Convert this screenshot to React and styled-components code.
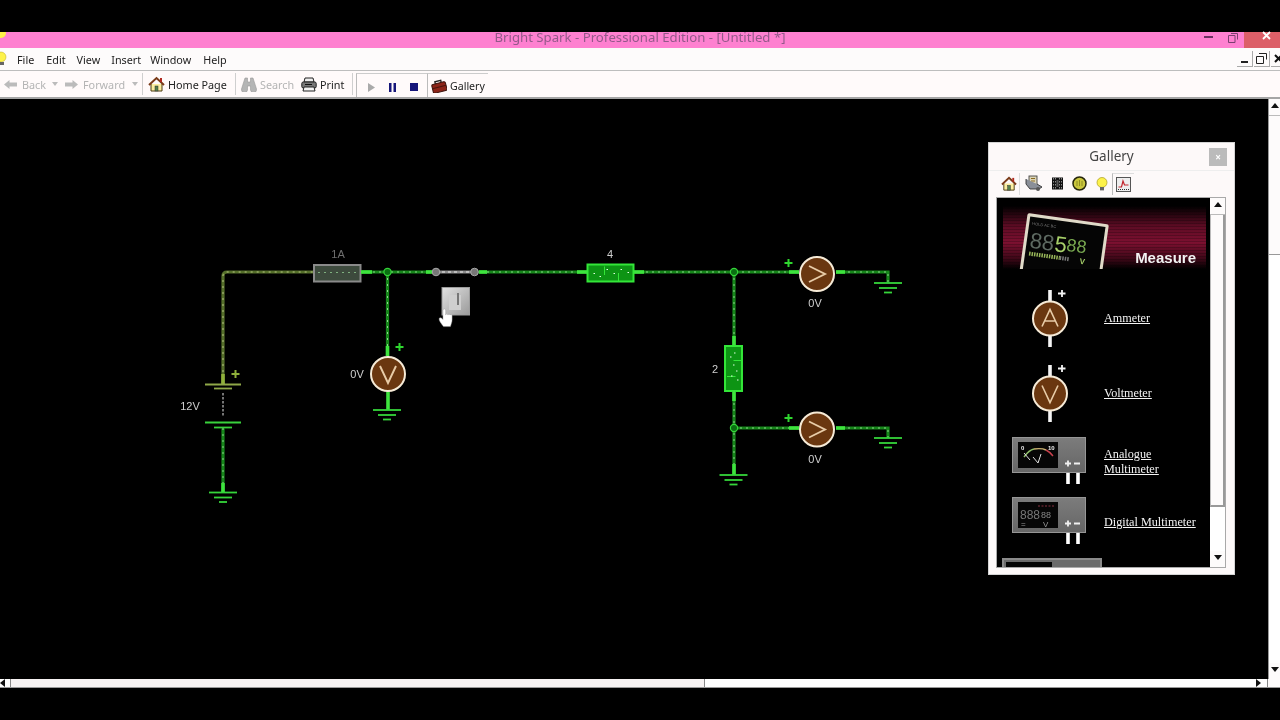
import React from 'react';
import styled, { createGlobalStyle } from 'styled-components';

const GlobalStyle = createGlobalStyle`
  html, body { margin: 0; padding: 0; background: #000; }
  body { font-family: "Noto Sans", "Liberation Sans", sans-serif; overflow: hidden; }
`;

const Page = styled.div`
  width: 1280px;
  height: 720px;
  padding: 32px 0;
  box-sizing: border-box;
  background: #000;
  display: flex;
  flex-direction: column;
  overflow: hidden;
  filter: blur(0.3px);
`;

const TitleBar = styled.div`
  height: 16px;
  flex: none;
  background: #fe80d0;
  display: grid;
  grid-template-columns: 1fr auto 1fr;
  align-items: start;
`;

const TitleText = styled.div`
  font-size: 13.2px;
  line-height: 10px;
  color: #94598a;
`;

const Caption = styled.div`
  display: flex;
  justify-content: flex-end;
  align-items: stretch;
  height: 16px;
`;

const CaptionButton = styled.div`
  width: ${p => p.$w}px;
  box-sizing: border-box;
  padding: 0 0 ${p => p.$lift || 5}px ${p => p.$shift || 0}px;
  display: flex;
  align-items: center;
  justify-content: center;
  background: ${p => p.$bg || 'transparent'};
`;

const MenuBar = styled.div`
  height: 23px;
  flex: none;
  background: #fdfbfb;
  border-bottom: 1px solid #bdbdbd;
  box-sizing: border-box;
  display: flex;
  align-items: center;
`;

const MenuItem = styled.span`
  font-size: 10.8px;
  color: #222;
  margin-left: ${p => p.$gap}px;
`;

const MdiButtons = styled.div`
  margin-left: auto;
  display: flex;
  height: 16px;
  align-items: stretch;
  margin-right: -7px;
`;

const MdiButton = styled.div`
  width: 15px;
  margin-left: 1px;
  display: flex;
  align-items: center;
  justify-content: center;
  border-right: 1px solid #aaa;
  border-bottom: 1px solid #aaa;
`;

const Toolbar = styled.div`
  height: 28px;
  flex: none;
  background: #fffafa;
  border-bottom: 2px solid #a5a5a5;
  box-sizing: border-box;
  display: flex;
  align-items: center;
  padding-left: 4px;
`;

const ToolItem = styled.div`
  width: ${p => p.$w}px;
  flex: none;
  display: flex;
  align-items: center;
  gap: ${p => p.$gap ?? 4}px;
  font-size: 10.8px;
  color: ${p => (p.$off ? '#b4b4b4' : '#222')};
  white-space: nowrap;
`;

const CaretSlot = styled.span`
  display: flex;
  margin-left: ${p => p.$left}px;
`;

const ToolDivider = styled.div`
  width: 1px;
  height: 22px;
  flex: none;
  background: #cfcfcf;
  margin-right: ${p => p.$after}px;
`;

const BoxedGroup = styled.div`
  width: ${p => p.$w}px;
  height: 24px;
  align-self: flex-end;
  flex: none;
  box-sizing: border-box;
  border-left: 1px solid #bbb;
  border-top: 1px solid #ccc;
  display: flex;
  align-items: center;
  padding: ${p => p.$top || 0}px 0 0 ${p => p.$pad}px;
  gap: ${p => p.$gap}px;
  font-size: 10.6px;
  color: #222;
`;

const Workspace = styled.div`
  flex: 1;
  min-height: 0;
  display: flex;
  position: relative;
`;

const Canvas = styled.div`
  flex: 1;
  background: #000;
  overflow: hidden;
`;

const VScroll = styled.div`
  width: 12px;
  flex: none;
  background: #fff;
  border-left: 1px solid #999;
  box-sizing: border-box;
  display: flex;
  flex-direction: column;
`;

const ScrollEnd = styled.div`
  height: 16px;
  flex: none;
  display: flex;
  align-items: center;
  justify-content: center;
  background: #fdfbfb;
  border-bottom: ${p => (p.$top ? '1px solid #bbb' : 'none')};
  margin-top: ${p => (p.$bottom ? 'auto' : '0')};
`;

const VThumb = styled.div`
  height: 138px;
  flex: none;
  background: #fdfbfb;
  border-bottom: 1px solid #999;
`;

const HScroll = styled.div`
  height: 9px;
  flex: none;
  background: #fff;
  display: flex;
  align-items: stretch;
  border-bottom: 1px solid #999;
  box-sizing: border-box;
`;

const HStart = styled.div`
  width: 10px;
  flex: none;
  display: flex;
  align-items: flex-end;
  overflow: hidden;
`;

const HThumb = styled.div`
  width: 693px;
  flex: none;
  background: #f6f2f2;
  border-left: 1px solid #888;
  border-right: 1px solid #888;
`;

const HEnd = styled.div`
  flex: 1;
  display: flex;
  justify-content: flex-end;
  align-items: flex-end;
  padding-right: 3px;
  overflow: hidden;
`;

const HCorner = styled.div`
  width: 12px;
  flex: none;
  border-left: 1px solid #888;
  background: #fdfbfb;
`;

/* floating window, sits over the canvas */
const GalleryWindow = styled.div`
  position: absolute;
  left: 988px;
  top: 43px;
  width: 247px;
  height: 433px;
  box-sizing: border-box;
  background: #fdf9f9;
  border: 1px solid #d4d4d4;
  display: flex;
  flex-direction: column;
`;

const GalleryTitle = styled.div`
  height: 27px;
  flex: none;
  display: flex;
  align-items: center;
  justify-content: center;
  position: relative;
  font-size: 13.5px;
  color: #444;
  padding-bottom: 1px;
  box-sizing: border-box;
`;

const CloseBox = styled.div`
  position: absolute;
  right: 7px;
  top: 5px;
  width: 18px;
  height: 18px;
  background: #bbb;
  color: #fff;
  font-size: 10px;
  line-height: 18px;
  text-align: center;
  font-weight: 700;
`;

const GalleryTools = styled.div`
  height: 26px;
  flex: none;
  border-top: 1px solid #eee;
  display: flex;
  align-items: center;
  padding-left: 9px;
  box-sizing: border-box;
`;

const GalleryTool = styled.div`
  width: ${p => p.$w}px;
  height: 22px;
  flex: none;
  display: flex;
  align-items: center;
  justify-content: center;
  box-sizing: border-box;
  border-left: ${p => (p.$pressed ? '1px solid #bbb' : 'none')};
  border-top: ${p => (p.$pressed ? '1px solid #ddd' : 'none')};
  border-right: ${p => (p.$split ? '1px solid #ddd' : 'none')};
`;

const ListFrame = styled.div`
  margin: 1px 8px 0 7px;
  height: 371px;
  flex: none;
  display: flex;
  border: 1px solid #a9a9a9;
  box-sizing: border-box;
`;

const List = styled.div`
  flex: 1;
  background: #000;
  overflow: hidden;
  display: flex;
  flex-direction: column;
`;

const Banner = styled.div`
  height: 63px;
  margin: 8px 4px 21px 6px;
  flex: none;
  position: relative;
  overflow: hidden;
  background:
    repeating-linear-gradient(0deg, rgba(0, 0, 0, 0.22) 0 1px, transparent 1px 3px),
    linear-gradient(180deg, #000 0%, #5d0c24 32%, #7c1030 58%, #3a0716 85%, #000 100%);
`;

const BannerLabel = styled.div`
  position: absolute;
  right: 10px;
  bottom: 3px;
  font: 700 15px "Liberation Sans", sans-serif;
  color: #f2f2f2;
`;

const MeterArt = styled.svg`
  position: absolute;
  left: 8px;
  top: 0;
`;

const ListRow = styled.div`
  height: ${p => p.$h}px;
  flex: none;
  display: flex;
  align-items: flex-start;
`;

const RowIcon = styled.div`
  width: 107px;
  flex: none;
  box-sizing: border-box;
  padding-left: ${p => p.$pad}px;
  display: flex;
`;

const RowLink = styled.a`
  font: 12.2px/15px "Liberation Serif", serif;
  color: #f4f4f4;
  text-decoration: underline;
  margin-top: ${p => p.$top}px;
  white-space: pre-line;
`;

const PartialMeter = styled.div`
  width: 100px;
  height: 30px;
  flex: none;
  margin-left: 5px;
  background: #6b6b6b;
  border: 2px solid #8a8a8a;
  box-sizing: border-box;
  padding: 2px 0 0 2px;
`;

const PartialScreen = styled.div`
  width: 46px;
  height: 20px;
  background: #050505;
`;

const ListScroll = styled.div`
  width: 15px;
  flex: none;
  background: #fff;
  display: flex;
  flex-direction: column;
`;

const ListThumb = styled.div`
  height: 292px;
  flex: none;
  background: #fdfbfb;
  border-left: 1px solid #bbb;
  border-right: 2px solid #999;
  border-bottom: 2px solid #999;
  box-sizing: border-box;
`;

const Arrow = ({ up, left, right }) => {
  const d = up ? 'M0 5 L4 0 L8 5Z' : left ? 'M5 0 L0 4 L5 8Z' : right ? 'M0 0 L5 4 L0 8Z' : 'M0 0 L8 0 L4 5Z';
  return (
    <svg width="8" height="8" viewBox="0 0 8 8" style={{ flex: 'none' }}>
      <path d={d} fill="#111" />
    </svg>
  );
};

const HomeIcon = ({ size = 17 }) => (
  <svg width={size} height={size} viewBox="0 0 17 17">
    <path d="M3 8v7h11V8" fill="#fbeea0" stroke="#4a3a10" strokeWidth="1" />
    <path d="M1 9l7.5-7L16 9" fill="none" stroke="#7a3a18" strokeWidth="2" />
    <rect x="12" y="2" width="2" height="4" fill="#b02a20" />
    <rect x="7" y="10" width="3" height="5" fill="#55804a" stroke="#333" strokeWidth="0.5" />
  </svg>
);

const BackArrow = ({ flip }) => (
  <svg width="13" height="11" viewBox="0 0 13 11" style={flip ? { transform: 'scaleX(-1)' } : undefined}>
    <path d="M0 5.5L5.5 1v2.5H13v4H5.5V10Z" fill="#bbb" />
  </svg>
);

const Caret = () => (
  <svg width="6" height="4" viewBox="0 0 6 4">
    <path d="M0 0h6L3 4Z" fill="#bbb" />
  </svg>
);

const Binoculars = () => (
  <svg width="16" height="15" viewBox="0 0 16 15">
    <path d="M4 1h2.5v4h3V1H12l3.5 11a2.5 2.5 0 0 1-6 1V9h-3v4a2.5 2.5 0 0 1-6-1Z" fill="#b5b5b5" stroke="#999" strokeWidth="0.6" />
  </svg>
);

const Printer = () => (
  <svg width="16" height="15" viewBox="0 0 16 15">
    <path d="M4 1h8l1 4H3Z" fill="#eee" stroke="#222" />
    <rect x="0.8" y="5" width="14.4" height="6" rx="1.5" fill="#777" stroke="#222" />
    <path d="M3 10h10l1 4H2Z" fill="#f4f4f4" stroke="#222" />
    <path d="M4 7.5h7" stroke="#111" />
  </svg>
);

const Briefcase = () => (
  <svg width="16" height="14" viewBox="0 0 16 14">
    <g transform="rotate(-14 8 7)">
      <path d="M5 4V2h6v2" fill="none" stroke="#222" strokeWidth="1.4" />
      <rect x="1" y="4" width="14" height="9" rx="1.5" fill="#8c2418" stroke="#3a120c" />
      <path d="M1 8h14" stroke="#4a140c" />
    </g>
  </svg>
);

const Bulb = ({ size = 14 }) => (
  <svg width={size} height={size} viewBox="0 0 14 14">
    <circle cx="7" cy="5.5" r="5" fill="#fdf24a" stroke="#a89a20" strokeWidth="0.7" />
    <rect x="5" y="10" width="4" height="3.4" fill="#666" />
  </svg>
);

const ToolsGlyph = () => (
  <svg width="18" height="17" viewBox="0 0 18 17">
    <rect x="4" y="1" width="8" height="9" fill="#dcd5b8" stroke="#444" strokeWidth="0.9" />
    <path d="M6 3.5h4M6 6h4" stroke="#8a6a20" />
    <path d="M1 4v5l4 5h9l3-2-5-3" fill="#8a8f98" stroke="#333" strokeWidth="0.9" />
    <circle cx="13" cy="14" r="2" fill="#555" />
  </svg>
);

const ChipGlyph = () => (
  <svg width="13" height="13" viewBox="0 0 13 13">
    <rect x="1" y="0.5" width="11" height="12" fill="#111" />
    <path d="M2.5 1v11M4.5 1v11M8.5 1v11M10.5 1v11" stroke="#8a8a8a" strokeDasharray="1.5 1.5" />
    <rect x="5.5" y="3" width="2" height="7" fill="#555" />
  </svg>
);

const DialGlyph = () => (
  <svg width="15" height="15" viewBox="0 0 15 15">
    <circle cx="7.5" cy="7.5" r="6.5" fill="#c9c63c" stroke="#26260c" strokeWidth="1.5" />
    <path d="M5 5v5M7.5 4v6M10 5v5" stroke="#8f8c22" />
  </svg>
);

const ChartGlyph = () => (
  <svg width="15" height="15" viewBox="0 0 15 15">
    <rect x="0.5" y="0.5" width="14" height="14" fill="#eee" stroke="#555" />
    <path d="M2.5 10h3l1.5-6 1.5 4h4" fill="none" stroke="#c2242c" strokeWidth="1.2" />
    <path d="M2 12.5h11" stroke="#333" strokeDasharray="1 1" />
  </svg>
);

const WIRE_GREEN = '#17871b';
const WIRE_BRIGHT = '#3ee43e';
const OLIVE = '#556f2a';

const Wire = ({ d, color = WIRE_GREEN, dash = '#8ad88a' }) => (
  <g fill="none">
    <path d={d} stroke={color} strokeWidth="3.2" />
    <path d={d} stroke={dash} strokeWidth="1" strokeDasharray="2 4" />
  </g>
);

const Stub = ({ d, color = WIRE_BRIGHT }) => <path d={d} stroke={color} strokeWidth="3.6" fill="none" />;

const Node = ({ x, y }) => <circle cx={x} cy={y} r="3.6" fill="#0a6f12" stroke="#35d53a" strokeWidth="1.2" />;

const SwitchNode = ({ x, y }) => <circle cx={x} cy={y} r="3.8" fill="#777" stroke="#a8a8a8" strokeWidth="1" />;

const Plus = ({ x, y, color = '#2fd62f' }) => (
  <path d={`M${x - 4} ${y}h8M${x} ${y - 4}v8`} stroke={color} strokeWidth="2" />
);

const Ground = ({ x, y, color = '#35d53a' }) => (
  <g stroke={color} strokeWidth="1.8">
    <path d={`M${x - 14} ${y}h28`} />
    <path d={`M${x - 9} ${y + 5}h18`} />
    <path d={`M${x - 4} ${y + 9.5}h8`} />
  </g>
);

const Meter = ({ x, y, d }) => (
  <g>
    <circle cx={x} cy={y} r="17" fill="#6a3710" stroke="#f6ead6" strokeWidth="2" />
    <path d={d} transform={`translate(${x} ${y})`} fill="none" stroke="#e8cca8" strokeWidth="1.9" />
  </g>
);

const CHEVRON = 'M-8 -8L8 0L-8 8';
const VEE = 'M-8 -8L0 9L8 -8';
const AYE = 'M-8 8L0 -9L8 8M-5 2.5H5';

const Label = styled.text`
  font-family: "Liberation Sans", sans-serif;
  font-size: 11px;
  fill: ${p => p.$color || '#cfcfcf'};
  text-anchor: middle;
`;

const Resistor = ({ x, y, w, h }) => (
  <g>
    <rect x={x} y={y} width={w} height={h} fill="#0d9414" stroke="#33e638" strokeWidth="2" />
    {w > h ? (
      <g>
        <path d={`M${x + w / 2 - 6} ${y + 2}v${h / 2}M${x + w / 2 + 8} ${y + h}v${-h / 2}`} stroke="#33e638" />
        <path
          d={`M${x + 6} ${y + 9}h1.5M${x + 12} ${y + 12}h1.5M${x + 19} ${y + 5}h1.5M${x + 26} ${y + 9}h1.5M${x + 33} ${y + 5}h1.5M${x + 40} ${y + 8}h1.5`}
          stroke="#e4ffe4"
        />
      </g>
    ) : (
      <g>
        <path d={`M${x + 2} ${y + h / 2 + 8}h${w / 2}M${x + w} ${y + h / 2 - 8}h${-w / 2}`} stroke="#33e638" />
        <path
          d={`M${x + 9} ${y + 7}h1.5M${x + 5} ${y + 11}h1.5M${x + 8} ${y + 19}h1.5M${x + 11} ${y + 25}h1.5M${x + 6} ${y + 30}h1.5M${x + 12} ${y + 34}h1.5`}
          stroke="#e4ffe4"
        />
      </g>
    )}
  </g>
);

const Circuit = () => (
  <svg width="1268" height="580" viewBox="0 99 1268 580" style={{ display: 'block' }}>
    <defs>
      <linearGradient id="switchFace" x1="0" y1="0" x2="1" y2="1">
        <stop offset="0" stopColor="#e2e2e2" />
        <stop offset="1" stopColor="#9a9a9a" />
      </linearGradient>
    </defs>

    {/* battery side, dim because no current runs */}
    <Wire d="M223 384V276Q223 272 227 272H314" color={OLIVE} dash="#b8c684" />
    <Stub d="M223 384V374" color="#8fb03a" />
    <path d="M205 384.5h36" stroke="#8fa848" strokeWidth="1.8" />
    <path d="M214 388.5h18" stroke="#8fa848" strokeWidth="1.8" />
    <path d="M223 393v24" stroke="#e8e8e8" strokeWidth="1" strokeDasharray="2.5 1.5" />
    <path d="M205 422.5h36" stroke="#39d13c" strokeWidth="1.8" />
    <path d="M214 427.5h18" stroke="#39d13c" strokeWidth="1.8" />
    <Wire d="M223 428V492" />
    <Stub d="M223 483V492" />
    <Ground x={223} y={492.5} />
    <Plus x={235.5} y={374} color="#8fb03a" />
    <Label x={190} y={410}>12V</Label>

    {/* fuse */}
    <rect x="314" y="265" width="46.5" height="16.5" fill="#3d4a3d" stroke="#8a8a8a" strokeWidth="2" />
    <path d="M318 272.5h38" stroke="#7fb07f" strokeWidth="1" strokeDasharray="2 4" />
    <Label x={338} y={258} $color="#6f6f6f">1A</Label>

    {/* top rail */}
    <Wire d="M361 272H436" />
    <Stub d="M361 272H372" />
    <Stub d="M426 272H432" />
    <path d="M436 272H475" stroke="#8c8c8c" strokeWidth="3" />
    <path d="M436 272H475" stroke="#eee" strokeWidth="1" strokeDasharray="3 3" />
    <Wire d="M475 272H587" />
    <Stub d="M479 272H487" />
    <Stub d="M577 272H587" />
    <Wire d="M634 272H799" />
    <Stub d="M634 272H644" />
    <Stub d="M789 272H799" />
    <Resistor x={587.5} y={264.5} w={46} h={17} />
    <Label x={610} y={258}>4</Label>

    {/* voltmeter branch */}
    <Wire d="M387.5 272V356" />
    <Stub d="M387.5 346V356" />
    <Stub d="M388 391V410" />
    <Meter x={388} y={374} d={VEE} />
    <Ground x={387} y={410} />
    <Plus x={399.5} y={347} />
    <Label x={357} y={378}>0V</Label>
    <Node x={387.5} y={272} />

    {/* switch gone open */}
    <SwitchNode x={436} y={272} />
    <SwitchNode x={474.5} y={272} />
    <rect x="442" y="287.5" width="27.5" height="27.5" fill="url(#switchFace)" stroke="#9c9c9c" />
    <path d="M449 295h12v15h-12Z" fill="#cfcfcf" />
    <path d="M458 293v12" stroke="#777" strokeWidth="2" />
    <g transform="translate(-46 -32) scale(1.1)">
      <path
        d="M445 326c-2-3-4-5-4-7 0-1 1.500-1.500 2.500-.5l1 1v-8c0-2 2.500-2 2.500 0v4c0-1.500 2-1.500 2 0 0-1 2-1 2 0 0-.8 1.800-.8 1.800.5v4c0 2-1 4-1.500 6Z"
        fill="#fff"
        stroke="#999"
        strokeWidth="0.4"
      />
    </g>

    {/* upper ammeter */}
    <Wire d="M836 272H888V283" />
    <Stub d="M836 272H845" />
    <Meter x={817} y={274} d={CHEVRON} />
    <Plus x={788.5} y={263} />
    <Label x={815} y={307}>0V</Label>
    <Ground x={888} y={283} />

    {/* shunt branch */}
    <Wire d="M734 272V346" />
    <Stub d="M734 336V346" />
    <Resistor x={725} y={346} w={17} h={45} />
    <Label x={715} y={373}>2</Label>
    <Wire d="M734 391V475" />
    <Stub d="M734 391V401" />
    <Stub d="M734 464V475" />
    <Ground x={733.5} y={475} />
    <Wire d="M734 428H799" />
    <Stub d="M789 428H799" />
    <Node x={734} y={272} />
    <Node x={734} y={428} />

    {/* lower ammeter */}
    <Wire d="M836 428H888V438" />
    <Stub d="M836 428H845" />
    <Meter x={817} y={429.500} d={CHEVRON} />
    <Plus x={788.5} y={418} />
    <Label x={815} y={463}>0V</Label>
    <Ground x={888} y={438} />
  </svg>
);

const MeterSymbol = ({ d }) => (
  <svg width="44" height="57" viewBox="0 0 44 57">
    <path d="M21 0V16M21 40V57" stroke="#f4f4f4" strokeWidth="3.6" />
    <circle cx="21" cy="28.5" r="17" fill="#6a3710" stroke="#f6ead6" strokeWidth="2" />
    <path d={d} transform="translate(21 28.5)" fill="none" stroke="#e8cca8" strokeWidth="1.6" />
    <path d="M29 3.500h7.500M33 0v7" stroke="#f4f4f4" strokeWidth="1.8" />
  </svg>
);

const BenchMeter = ({ children }) => (
  <svg width="74" height="47" viewBox="0 0 74 47">
    <defs>
      <linearGradient id="benchFace" x1="0" y1="0" x2="0" y2="1">
        <stop offset="0" stopColor="#7c7c7c" />
        <stop offset="1" stopColor="#666" />
      </linearGradient>
    </defs>
    <rect x="0.5" y="0.5" width="73" height="35" fill="url(#benchFace)" stroke="#969696" />
    <rect x="6" y="5" width="40" height="26" fill="#060606" />
    <path d="M53 26.500h6M56 23.500v6M62 26.500h6" stroke="#f0f0f0" strokeWidth="1.8" />
    <path d="M56 36v11M66 36v11" stroke="#fff" strokeWidth="3.6" />
    {children}
  </svg>
);

const SegText = styled.text`
  font-family: "Liberation Sans", sans-serif;
  font-size: ${p => p.$size}px;
  fill: ${p => p.$color};
  font-weight: ${p => p.$bold ? 700 : 400};
`;

const BannerMeter = () => (
  <MeterArt width="120" height="66" viewBox="0 -3 120 66">
    <g transform="rotate(8 50 40)">
      <rect x="12" y="9" width="82" height="70" rx="2" fill="#e0dac8" />
      <rect x="15" y="12" width="76" height="64" fill="#050505" />
      <SegText x="18" y="20" $size={4} $color="#777">HOLD AC BC</SegText>
      <SegText x="18" y="43" $size={22} $color="#5e6a62">88</SegText>
      <SegText x="43" y="43" $size={22} $color="#a7d06a">5</SegText>
      <SegText x="55" y="41" $size={18} $color="#78a850">88</SegText>
      <path d="M19 49H50" stroke="#9ab85a" strokeWidth="4" strokeDasharray="1.5 1" />
      <path d="M50 49H60" stroke="#777" strokeWidth="4" strokeDasharray="1.5 1" />
      <SegText x="70" y="52" $size={8} $color="#a7d06a" $bold>V</SegText>
    </g>
  </MeterArt>
);

export default function App() {
  return (
    <Page>
      <GlobalStyle />
      <TitleBar>
        <svg width="8" height="10" viewBox="6 0 8 10" style={{ display: 'block' }}>
          <circle cx="7" cy="1" r="5" fill="#fdf24a" />
        </svg>
        <TitleText>Bright Spark - Professional Edition - [Untitled *]</TitleText>
        <Caption>
          <CaptionButton $w={28}>
            <svg width="9" height="3"><rect width="9" height="2" fill="#6a3060" /></svg>
          </CaptionButton>
          <CaptionButton $w={22}>
            <svg width="10" height="10" viewBox="0 0 10 10">
              <path d="M3 .5h6.500v6M.5 2.500h6.500v7H.5Z" fill="none" stroke="#7a4070" />
            </svg>
          </CaptionButton>
          <CaptionButton $w={36} $bg="#dc5f68" $shift={8} $lift={9}>
            <svg width="9" height="9" viewBox="0 0 9 9">
              <path d="M1 1l7 7M8 1L1 8" stroke="#fff" strokeWidth="1.8" />
            </svg>
          </CaptionButton>
        </Caption>
      </TitleBar>

      <MenuBar>
        <svg width="8" height="16" viewBox="6 0 8 16" style={{ flex: 'none' }}>
          <circle cx="7" cy="6" r="5" fill="#fdf24a" stroke="#b8a820" strokeWidth="0.5" />
          <rect x="6" y="11" width="4" height="3" fill="#666" />
        </svg>
        <MenuItem $gap={9}>File</MenuItem>
        <MenuItem $gap={12}>Edit</MenuItem>
        <MenuItem $gap={11}>View</MenuItem>
        <MenuItem $gap={11}>Insert</MenuItem>
        <MenuItem $gap={9}>Window</MenuItem>
        <MenuItem $gap={12}>Help</MenuItem>
        <MdiButtons>
          <MdiButton>
            <svg width="7" height="8" viewBox="0 0 7 8"><rect y="6" width="7" height="2" fill="#222" /></svg>
          </MdiButton>
          <MdiButton>
            <svg width="11" height="11" viewBox="0 0 11 11">
              <path d="M3 .5h7.500v6M.5 3.500h7v7h-7Z" fill="none" stroke="#222" />
            </svg>
          </MdiButton>
          <MdiButton>
            <svg width="9" height="9" viewBox="0 0 9 9">
              <path d="M1 1l7 7M8 1L1 8" stroke="#111" strokeWidth="2" />
            </svg>
          </MdiButton>
        </MdiButtons>
      </MenuBar>

      <Toolbar>
        <ToolItem $w={61} $off $gap={5}>
          <BackArrow />
          <span>Back</span>
          <CaretSlot $left={1}><Caret /></CaretSlot>
        </ToolItem>
        <ToolItem $w={77} $off $gap={5}>
          <BackArrow flip />
          <span>Forward</span>
          <CaretSlot $left={2}><Caret /></CaretSlot>
        </ToolItem>
        <ToolDivider $after={5} />
        <ToolItem $w={87} $gap={3}>
          <HomeIcon />
          <span>Home Page</span>
        </ToolItem>
        <ToolDivider $after={5} />
        <ToolItem $w={60} $off $gap={3}>
          <Binoculars />
          <span>Search</span>
        </ToolItem>
        <ToolItem $w={51} $gap={3}>
          <Printer />
          <span>Print</span>
        </ToolItem>
        <ToolDivider $after={3} />
        <BoxedGroup $w={71} $pad={11} $gap={14} $top={3}>
          <svg width="7" height="9" viewBox="0 0 7 9"><path d="M0 0l7 4.500L0 9Z" fill="#aaa" /></svg>
          <svg width="7" height="9" viewBox="0 0 7 9"><path d="M0 0h2.500v9H0ZM4.500 0H7v9H4.500Z" fill="#16167a" /></svg>
          <svg width="8" height="8" viewBox="0 0 8 8"><rect width="8" height="8" fill="#16167a" /></svg>
        </BoxedGroup>
        <BoxedGroup $w={61} $pad={3} $gap={3}>
          <Briefcase />
          <span>Gallery</span>
        </BoxedGroup>
      </Toolbar>

      <Workspace>
        <Canvas>
          <Circuit />
        </Canvas>
        <VScroll>
          <ScrollEnd $top><Arrow up /></ScrollEnd>
          <VThumb />
          <ScrollEnd $bottom><Arrow /></ScrollEnd>
        </VScroll>

        <GalleryWindow>
          <GalleryTitle>
            Gallery
            <CloseBox>×</CloseBox>
          </GalleryTitle>
          <GalleryTools>
            <GalleryTool $w={22} $split><HomeIcon size={16} /></GalleryTool>
            <GalleryTool $w={28}><ToolsGlyph /></GalleryTool>
            <GalleryTool $w={19}><ChipGlyph /></GalleryTool>
            <GalleryTool $w={24}><DialGlyph /></GalleryTool>
            <GalleryTool $w={21}><Bulb /></GalleryTool>
            <GalleryTool $w={22} $pressed><ChartGlyph /></GalleryTool>
          </GalleryTools>
          <ListFrame>
            <List>
              <Banner>
                <BannerMeter />
                <BannerLabel>Measure</BannerLabel>
              </Banner>
              <ListRow $h={75}>
                <RowIcon $pad={32}><MeterSymbol d={AYE} /></RowIcon>
                <RowLink $top={21}>Ammeter</RowLink>
              </ListRow>
              <ListRow $h={72}>
                <RowIcon $pad={32}><MeterSymbol d={VEE} /></RowIcon>
                <RowLink $top={21}>Voltmeter</RowLink>
              </ListRow>
              <ListRow $h={60}>
                <RowIcon $pad={15}>
                  <BenchMeter>
                    <path d="M12 20Q17 13 22 12" fill="none" stroke="#8fbf6a" strokeWidth="1.4" />
                    <path d="M22 12Q30 11 34 13" fill="none" stroke="#c8b070" strokeWidth="1.4" />
                    <path d="M34 13Q38 15 41 19" fill="none" stroke="#c8404c" strokeWidth="1.4" />
                    <path d="M12 16l6 7M26 26l-5-6M26 26l3-9" stroke="#e0e0e0" strokeWidth="1" fill="none" />
                    <SegText x="9" y="13" $size={6} $color="#eee" $bold>0</SegText>
                    <SegText x="36" y="13" $size={6} $color="#eee" $bold>10</SegText>
                  </BenchMeter>
                </RowIcon>
                <RowLink $top={10}>{'Analogue\nMultimeter'}</RowLink>
              </ListRow>
              <ListRow $h={61}>
                <RowIcon $pad={15}>
                  <BenchMeter>
                    <path d="M26 9h16" stroke="#8a3040" strokeDasharray="2 1.5" />
                    <SegText x="8" y="22" $size={12} $color="#777">888</SegText>
                    <SegText x="29" y="21" $size={9} $color="#888">88</SegText>
                    <SegText x="9" y="30" $size={8} $color="#999">=</SegText>
                    <SegText x="31" y="30" $size={8} $color="#999">V</SegText>
                  </BenchMeter>
                </RowIcon>
                <RowLink $top={18}>Digital Multimeter</RowLink>
              </ListRow>
              <PartialMeter><PartialScreen /></PartialMeter>
            </List>
            <ListScroll>
              <ScrollEnd $top><Arrow up /></ScrollEnd>
              <ListThumb />
              <ScrollEnd $bottom><Arrow /></ScrollEnd>
            </ListScroll>
          </ListFrame>
        </GalleryWindow>
      </Workspace>

      <HScroll>
        <HStart><Arrow left /></HStart>
        <HThumb />
        <HEnd><Arrow right /></HEnd>
        <HCorner />
      </HScroll>
    </Page>
  );
}
